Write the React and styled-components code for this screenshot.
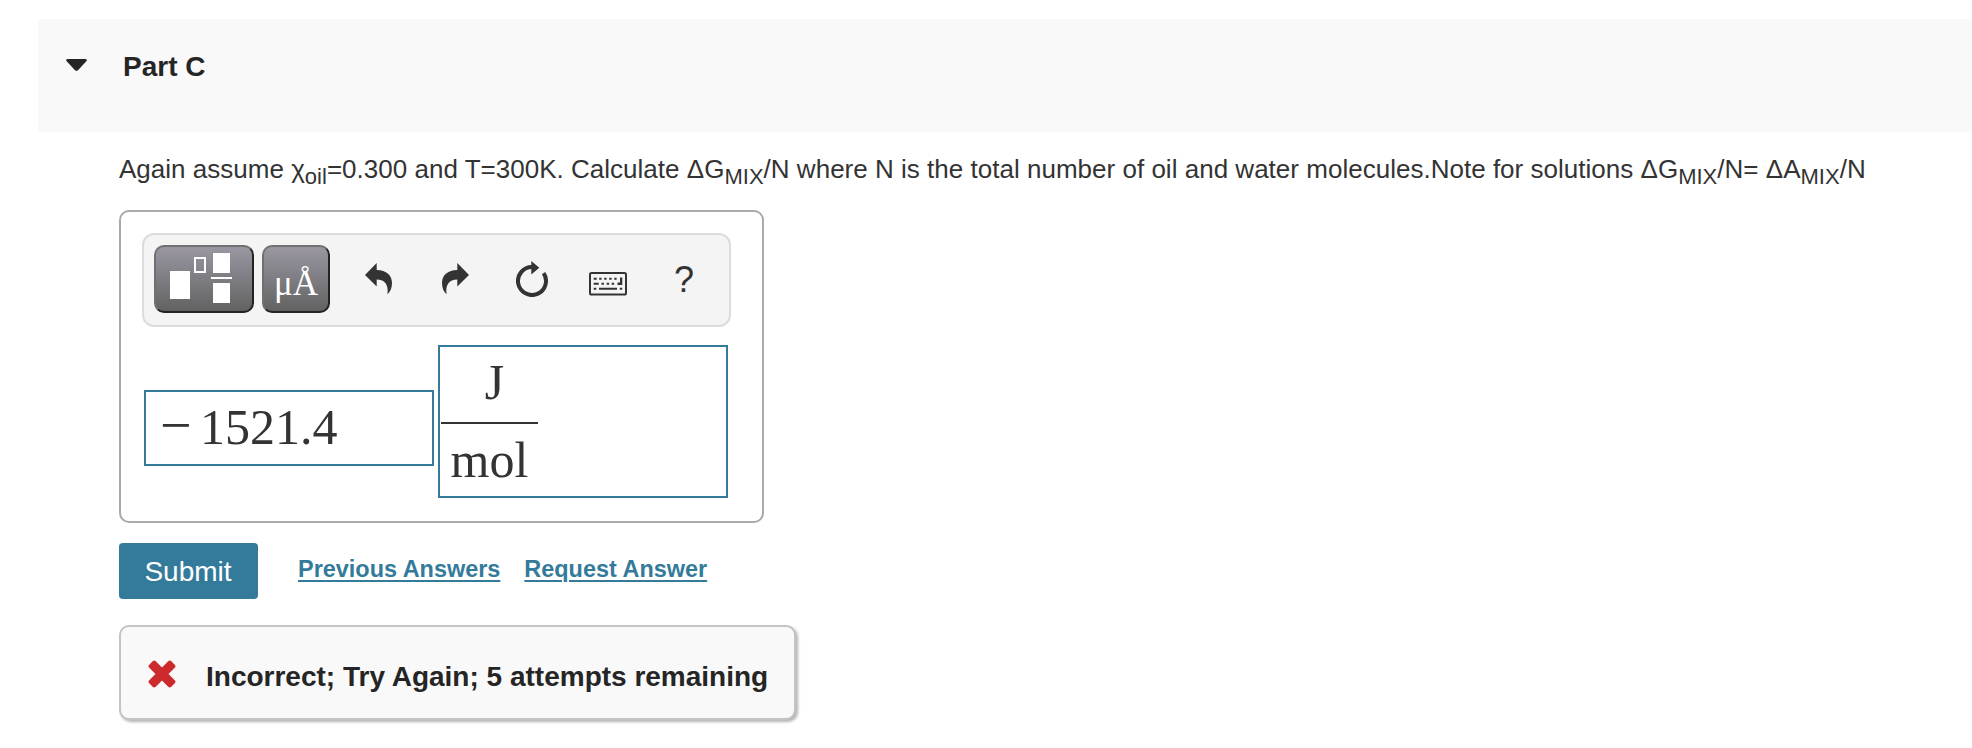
import styled, { createGlobalStyle } from "styled-components";

const answer = { value: "1521.4", unit: { top: "J", bottom: "mol" } };
const attempts = 5;

export default function App() {
  return (
    <>
      <GlobalStyle />
      <PartHeader>
        <Caret viewBox="0 0 21 12">
          <path d="M1.5 0H19.5Q21.8 .6 20.3 2.2L12 11.2Q10.5 12.4 9 11.2L.7 2.2Q-.8 .6 1.5 0Z" />
        </Caret>
        <PartTitle>Part C</PartTitle>
      </PartHeader>
      <Content>
        <Question>
          Again assume χ<Sub>oil</Sub>=0.300 and T=300K. Calculate ΔG
          <Sub>MIX</Sub>/N where N is the total number of oil and water
          molecules.Note for solutions ΔG<Sub>MIX</Sub>/N= ΔA<Sub>MIX</Sub>/N
        </Question>
        <AnswerBox>
          <Toolbar />
          <Fields>
            <ValueField>
              <Minus>−</Minus>
              {answer.value}
            </ValueField>
            <UnitField>
              <Fraction>
                <Numerator>{answer.unit.top}</Numerator>
                <Denominator>{answer.unit.bottom}</Denominator>
              </Fraction>
            </UnitField>
          </Fields>
        </AnswerBox>
        <Actions>
          <Submit>Submit</Submit>
          <ActionLink href="#">Previous Answers</ActionLink>
          <ActionLink href="#">Request Answer</ActionLink>
        </Actions>
        <Feedback>
          <Cross viewBox="0 0 28 28">
            <rect x="-1.6" y="9.4" width="31.2" height="9.2" rx="2.2" transform="rotate(45 14 14)" />
            <rect x="-1.6" y="9.4" width="31.2" height="9.2" rx="2.2" transform="rotate(-45 14 14)" />
          </Cross>
          <FeedbackText>
            Incorrect; Try Again; {attempts} attempts remaining
          </FeedbackText>
        </Feedback>
      </Content>
    </>
  );
}

function Toolbar() {
  return (
    <ToolbarBg>
      <TemplatesButton>
        <svg width="62" height="52" viewBox="0 0 62 52">
          <g fill="#fff">
            <rect x="0" y="18" width="20" height="28" />
            <rect x="43" y="0" width="17" height="20" />
            <rect x="41" y="24" width="21" height="2" />
            <rect x="43" y="30" width="17" height="20" />
          </g>
          <rect x="25" y="5" width="10" height="14" fill="none" stroke="#fff" strokeWidth="2" />
        </svg>
      </TemplatesButton>
      <SymbolsButton>μÅ</SymbolsButton>
      <IconButton $left={27} $top={18} $width={27} $height={32}>
        <svg viewBox="0 0 27 32">
          <path d={ARROW} />
        </svg>
      </IconButton>
      <IconButton $left={50} $top={18} $width={27} $height={32}>
        <svg viewBox="0 0 27 32">
          <path d={ARROW} transform="matrix(-1 0 0 1 27 0)" />
        </svg>
      </IconButton>
      <IconButton $left={47} $top={16} $width={32} $height={36}>
        <svg viewBox="0 0 32 36">
          <path d="M16 6A14 14 0 1 0 27.6 12.2" fill="none" stroke="#333" strokeWidth="4" />
          <path d="M15.3 0L23.3 6.8L15.3 13.4Z" />
        </svg>
      </IconButton>
      <IconButton $left={41} $top={27} $width={38} $height={24}>
        <svg viewBox="0 0 38 24">
          <rect x="1" y="1" width="36" height="21.6" rx="1.6" fill="none" stroke="#333" strokeWidth="2" />
          <path d="M4.7 5.7h3v2h-3zM10.2 5.7h2.4v2h-2.4zM15.2 5.7h2.4v2h-2.4zM20.2 5.7h2.4v2h-2.4zM25.2 5.7h2.4v2h-2.4zM4.7 10.7h5v2h-5zM12.5 10.7h2.4v2h-2.4zM17.7 10.7h2.4v2h-2.4zM22.7 10.7h2.4v2h-2.4zM31 5.5h2.3v7.4h-4.8v-2.3h2.5zM4.7 15.8h2.6v2h-2.6zM10 15.8h18v2h-18zM30.8 15.8h2.4v2h-2.4z" />
        </svg>
      </IconButton>
      <Help>?</Help>
    </ToolbarBg>
  );
}

const ARROW =
  "M0 12L11.7 0V7C21.5 7 27 12.5 27 20C27 25 25.2 29 22.3 31.3C24 22.5 20 16.5 11.7 16.5V23.5Z";

const GlobalStyle = createGlobalStyle`
  * {
    box-sizing: border-box;
  }

  body {
    min-height: 100vh;

    margin: 0;
    padding-top: 19px;

    background: white;
    color: #333;

    font-family: "Liberation Sans", Arial, sans-serif;
  }
`;

const PartHeader = styled.header`
  display: flex;
  align-items: flex-start;

  height: 113px;

  margin-left: 38px;
  padding-left: 28px;

  background: #f9f9f9;
`;

const Caret = styled.svg`
  width: 21px;
  height: 12px;

  margin-top: 40px;

  fill: #252525;
`;

const PartTitle = styled.h2`
  margin: 32px 0 0 36px;

  color: #252525;

  font-size: 28px;
  line-height: 32px;
`;

const Content = styled.main`
  padding-left: 119px;
`;

const Question = styled.p`
  height: 78px;

  margin: 0;
  padding-top: 22px;

  font-size: 26px;
  line-height: 30px;
  letter-spacing: 0.015px;
  white-space: nowrap;
`;

const Sub = styled.sub`
  font-size: 22px;
  line-height: 0;
`;

const AnswerBox = styled.section`
  width: 645px;
  height: 313px;

  padding: 21px;

  border: 2px solid #aaa;
  border-radius: 10px;
`;

const ToolbarBg = styled.div`
  display: flex;
  align-items: flex-start;

  width: 589px;
  height: 94px;

  padding: 10px;

  border: 2px solid #dcdcdc;
  border-radius: 12px;

  background: #f4f4f4;
`;

const ToolButton = styled.button`
  display: flex;
  align-items: flex-start;

  height: 68px;

  margin-right: 8px;

  border: 2px solid;
  border-color: #707070 #222 #222 #707070;
  border-radius: 10px;

  background: linear-gradient(#9a97a2, #626262);
  color: white;
`;

const TemplatesButton = styled(ToolButton)`
  width: 100px;

  padding: 6px 0 0 14px;
`;

const SymbolsButton = styled(ToolButton)`
  justify-content: center;

  width: 68px;

  padding: 17px 0 0;

  font-family: "Liberation Serif", "Times New Roman", serif;
  font-size: 35px;
  line-height: 40px;
`;

const IconButton = styled.button`
  width: ${({ $width }) => $width}px;
  height: ${({ $height }) => $height}px;

  margin: ${({ $top, $left }) => `${$top}px 0 0 ${$left}px`};
  padding: 0;

  border: 0;

  background: none;
  fill: #333;

  svg {
    display: block;

    width: 100%;
    height: 100%;
  }
`;

const Help = styled.span`
  margin: 14px 0 0 47px;

  font-size: 36px;
  line-height: 42px;
`;

const Fields = styled.div`
  display: flex;
  align-items: center;
  gap: 4px;

  margin: 18px 0 0 2px;

  font-family: "Liberation Serif", "Times New Roman", serif;
  font-size: 50px;
`;

const Field = styled.div`
  width: 290px;

  border: 2px solid #347b9b;
`;

const ValueField = styled(Field)`
  display: flex;

  height: 76px;

  margin-top: 13px;
  padding-left: 14px;

  line-height: 70px;
`;

const Minus = styled.span`
  width: 40px;

  font-size: 56px;
  line-height: 67px;
`;

const UnitField = styled(Field)`
  height: 153px;

  padding-left: 1px;
`;

const Fraction = styled.div`
  width: 97px;

  text-align: center;
`;

const Numerator = styled.div`
  height: 77px;

  padding-left: 10px;

  border-bottom: 2px solid #333;

  line-height: 70px;
`;

const Denominator = styled.div`
  line-height: 72px;
`;

const Actions = styled.div`
  display: flex;

  height: 56px;

  margin-top: 20px;
`;

const Submit = styled.button`
  width: 139px;

  margin-right: 16px;
  padding: 1px 1px 0 0;

  border: 0;
  border-radius: 4px;

  background: #347b9b;
  color: white;

  font-family: inherit;
  font-size: 28px;
`;

const ActionLink = styled.a`
  margin: 12px 0 0 24px;

  color: #347b9b;

  font-size: 23.45px;
  font-weight: bold;
  line-height: 28px;
  text-underline-offset: 3px;
  text-decoration-thickness: 2px;
`;

const Feedback = styled.div`
  display: flex;
  align-items: flex-start;

  width: 677px;
  height: 95px;

  margin-top: 26px;
  padding-left: 27px;

  border: 2px solid #c4c4c4;
  border-radius: 10px;

  background: #f9f9f9;
  box-shadow: 2px 2px 3px #b4b4b4;
`;

const Cross = styled.svg`
  width: 28px;
  height: 28px;

  margin-top: 33px;

  fill: #cd2a2d;
`;

const FeedbackText = styled.strong`
  margin: 34px 0 0 30px;

  color: #252525;

  font-size: 28px;
  line-height: 32px;
`;
